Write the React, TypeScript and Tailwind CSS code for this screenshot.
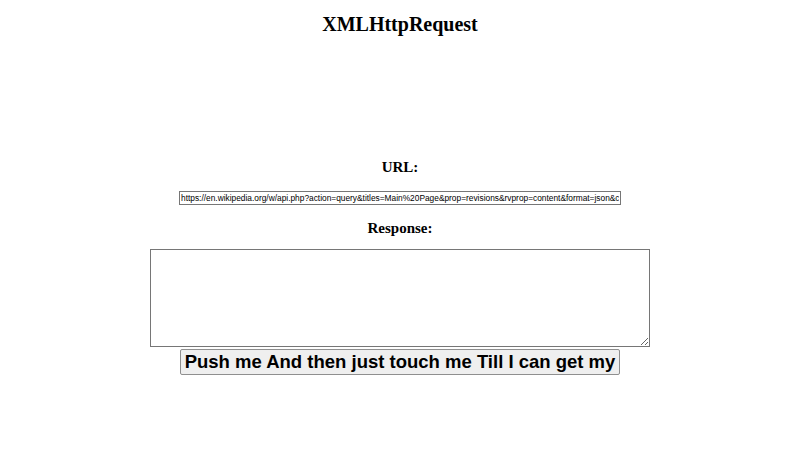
export default function App() {
  return (
    <div className="w-[800px] h-[450px] bg-white flex flex-col items-center text-black overflow-hidden">
      <h1 className="pt-[12px] text-[20px] leading-[24px] font-bold font-['Liberation_Serif',serif]">
        XMLHttpRequest
      </h1>
      <h3 className="mt-[122px] text-[15px] leading-[18px] font-bold font-['Liberation_Serif',serif]">
        URL:
      </h3>
      <input
        type="text"
        readOnly
        defaultValue="https://en.wikipedia.org/w/api.php?action=query&titles=Main%20Page&prop=revisions&rvprop=content&format=json&callback=?"
        className="mt-[15px] w-[442px] h-[14px] border border-[#767676] px-[1px] text-[8.35px] leading-[12px] outline-none font-['Liberation_Sans',sans-serif]"
      />
      <h3 className="mt-[14px] text-[15px] leading-[18px] font-bold font-['Liberation_Serif',serif]">
        Response:
      </h3>
      <textarea
        readOnly
        className="mt-[12px] w-[500px] h-[98px] border border-[#767676] outline-none"
      />
      <button className="mt-[2px] w-[440px] h-[26px] border border-[#8f8f8f] bg-[#efefef] rounded-[2px] text-[18.5px] leading-[22px] font-bold whitespace-nowrap font-['Liberation_Sans',sans-serif]">
        Push me And then just touch me Till I can get my
      </button>
    </div>
  );
}
